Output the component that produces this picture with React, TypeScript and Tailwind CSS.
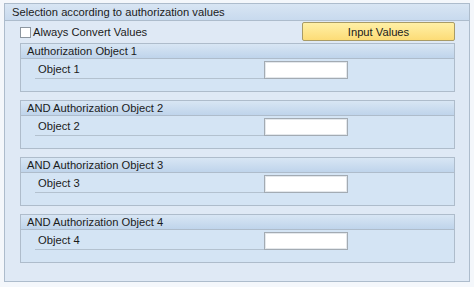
import React from "react";

const groups = [
  { title: "Authorization Object 1", label: "Object 1" },
  { title: "AND Authorization Object 2", label: "Object 2" },
  { title: "AND Authorization Object 3", label: "Object 3" },
  { title: "AND Authorization Object 4", label: "Object 4" },
];

export default function App() {
  return (
    <div
      className="w-[474px] h-[287px] bg-[#f4f7fb] pt-[3px] pl-[4px] text-[#1b1b1b] text-[11.2px]"
      style={{ fontFamily: '"Liberation Sans", Arial, sans-serif' }}
    >
      <div className="w-[466px] h-[279px] border border-[#adbccc] bg-[#dfe9f5] flex flex-col">
        <div className="h-[17px] shrink-0 bg-gradient-to-b from-[#d8e5f3] to-[#c8daee] border-b border-[#adbccc] pl-[7px] leading-[16px]">
          Selection according to authorization values
        </div>
        <div className="pl-[15px] pr-[14px] pt-[1px] flex flex-col">
          <div className="h-[19px] flex items-center justify-between">
            <div className="flex items-center">
              <div className="w-[11px] h-[11px] bg-white border border-[#8d969f] mt-[1px]" />
              <span className="ml-[2px] leading-[16px] mt-[1px]">Always Convert Values</span>
            </div>
            <div className="w-[153px] h-[19px] rounded-[2px] border border-[#a89b66] bg-gradient-to-b from-[#fff0a6] to-[#fcdc76] flex items-center justify-center leading-[16px]">
              Input Values
            </div>
          </div>
          <div className="flex flex-col gap-[8px] mt-[2px]">
            {groups.map((g) => (
              <div key={g.title} className="h-[49px] border border-[#aebccb] bg-[#d4e4f4] flex flex-col">
                <div className="h-[15px] shrink-0 border-b border-[#aebccb] bg-gradient-to-b from-[#d8e6f4] to-[#bfd4eb] pl-[6px] leading-[14px]">
                  {g.title}
                </div>
                <div className="h-[20px] flex items-end ml-[14px]">
                  <div className="w-[229px] h-[20px] border-b border-[#b3c1cf] pl-[3px] leading-[20px]">
                    {g.label}
                  </div>
                  <div className="w-[84px] h-[18px] bg-white border border-[#a3abb3] shadow-[inset_0_0_0_1px_#e4e8ec]" />
                </div>
              </div>
            ))}
          </div>
        </div>
      </div>
    </div>
  );
}
